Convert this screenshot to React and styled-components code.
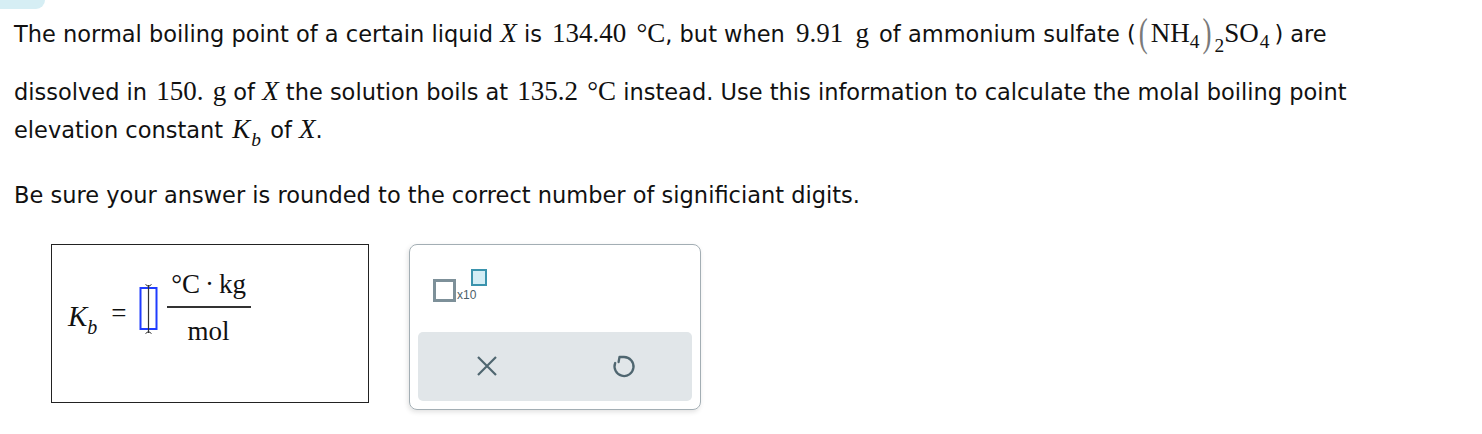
import React from 'react';
import styled, { createGlobalStyle } from 'styled-components';

const Global = createGlobalStyle`
  html, body { margin: 0; padding: 0; background: #fff; }
  body { font-family: "DejaVu Sans", Verdana, sans-serif; color: #111; }
`;

const Page = styled.div`
  width: 1482px;
  height: 434px;
  overflow: hidden;
  position: relative;
`;

const Tab = styled.div`
  width: 45px;
  height: 9px;
  background: #d6eef4;
  border-bottom-right-radius: 10px;
`;

const Question = styled.div`
  padding: 6px 0 0 14px;
  font-size: 22.5px;
  line-height: 38px;
  white-space: nowrap;
`;

const Line = styled.div`
  height: 38px;
  margin-bottom: ${(p) => p.$gap || 0}px;
`;

const M = styled.span`
  font-family: "Liberation Serif", "Times New Roman", serif;
  font-size: 1.2em;
  line-height: 0;
  font-style: ${(p) => (p.$i ? 'italic' : 'normal')};
  margin: 0 ${(p) => p.$mr ?? p.$mx ?? 0}px 0 ${(p) => p.$ml ?? p.$mx ?? 0}px;
`;

const Sub = styled.span`
  font-size: 72%;
  position: relative;
  top: ${(p) => p.$drop || 0.3}em;
  margin-left: ${(p) => p.$ml || 0}px;
`;

const BigParen = styled.span`
  display: inline-block;
  color: #7a7a7a;
  transform: scaleY(1.45);
  transform-origin: 50% 60%;
  margin: 0 3px;
`;

const AnswerRow = styled.div`
  display: flex;
  align-items: flex-start;
  padding-left: 51px;
  margin-top: 30px;
  gap: 40px;
`;

const AnswerBox = styled.div`
  box-sizing: border-box;
  width: 318px;
  height: 159px;
  border: 1px solid #222;
  padding: 24px 0 0 16px;
`;

const MathRow = styled.div`
  display: flex;
  align-items: flex-start;
  font-family: "Liberation Serif", "Times New Roman", serif;
  font-size: 27px;
  line-height: 27px;
  color: #111;
`;

const Kb = styled.div`
  margin-top: 33px;
  display: flex;
  align-items: flex-start;
  font-style: italic;
  font-size: 29px;
  line-height: 29px;
`;

const KbSub = styled.span`
  font-size: 20px;
  line-height: 20px;
  margin-top: 15px;
`;

const Equals = styled.div`
  margin-top: 31px;
  margin-left: 14px;
`;

const InputSlot = styled.svg`
  margin-top: 14px;
  margin-left: 12px;
  flex: none;
`;

const Fraction = styled.div`
  display: flex;
  flex-direction: column;
  align-items: center;
  margin-left: 9px;
  width: 84px;
`;

const Num = styled.div`
  line-height: 31px;
  padding-bottom: 6px;
  white-space: nowrap;
`;

const Bar = styled.div`
  width: 100%;
  height: 2px;
  background: #333;
`;

const Den = styled.div`
  line-height: 31px;
  margin-top: 8px;
`;

const Dot = styled.span`
  margin: 0 5px;
`;

const Panel = styled.div`
  box-sizing: border-box;
  width: 292px;
  height: 166px;
  border: 1px solid #a3aeb4;
  border-radius: 8px;
  box-shadow: -1px 2px 5px rgba(0, 0, 0, 0.12);
  padding: 8px;
  display: flex;
  flex-direction: column;
`;

const TopArea = styled.div`
  height: 79px;
  padding: 16px 0 0 15px;
  box-sizing: border-box;
`;

const ExpIcon = styled.div`
  display: inline-flex;
  align-items: flex-start;
`;

const BigSquare = styled.div`
  box-sizing: border-box;
  width: 23px;
  height: 23px;
  border: 3px solid #7d9099;
  margin-top: 10px;
`;

const ExpLabel = styled.span`
  font-family: "Liberation Sans", Arial, sans-serif;
  font-size: 12px;
  line-height: 12px;
  color: #4b5e68;
  margin-top: 20px;
  margin-left: 1px;
`;

const SmallSquare = styled.div`
  box-sizing: border-box;
  width: 16px;
  height: 17px;
  border: 2.5px solid #3a93ad;
  background: #d3edf5;
  margin-left: -5px;
`;

const ButtonBar = styled.div`
  height: 70px;
  background: #e1e6e9;
  border-radius: 5px;
  display: flex;
`;

const ToolButton = styled.div`
  flex: 1;
  display: flex;
  align-items: center;
  justify-content: center;
  color: #4f6670;
`;

export default function App() {
  return (
    <Page>
      <Global />
      <Tab />
      <Question>
        <Line $gap={20}>
          The normal boiling point of a certain liquid <M $i>X</M> is <M $mx={3}>134.40</M> <M>°C</M>, but when{' '}
          <M $mx={4}>9.91</M> <M $ml={1} $mr={3}>g</M> of ammonium sulfate (
          <M $ml={0} $mr={5}>
            <BigParen>(</BigParen>NH<Sub>4</Sub>
            <BigParen>)</BigParen>
            <Sub $drop={0.5}>2</Sub>SO<Sub $ml={1}>4</Sub>
          </M>
          ) are
        </Line>
        <Line>
          dissolved in <M $mx={2}>150.</M> <M>g</M> of <M $i>X</M> the solution boils at <M $mx={2}>135.2</M>{' '}
          <M>°C</M> instead. Use this information to calculate the molal boiling point
        </Line>
        <Line $gap={27}>
          elevation constant{' '}
          <M $i $mx={2}>
            K<Sub $ml={1} $drop={0.4}>b</Sub>
          </M>{' '}
          of <M $i>X</M>.
        </Line>
        <Line>Be sure your answer is rounded to the correct number of significiant digits.</Line>
      </Question>
      <AnswerRow>
        <AnswerBox>
          <MathRow>
            <Kb>
              K<KbSub>b</KbSub>
            </Kb>
            <Equals>=</Equals>
            <InputSlot width="19" height="52" viewBox="0 0 19 52">
              <rect x="1.5" y="5" width="16" height="41" fill="#fff" stroke="#1f3cff" strokeWidth="2" />
              <line x1="9.5" y1="2" x2="9.5" y2="50" stroke="#333" strokeWidth="1.2" />
              <path d="M6.5 1.5 L9.5 3.5 L12.5 1.5 M6.5 50.5 L9.5 48.5 L12.5 50.5" stroke="#333" strokeWidth="1" fill="none" />
            </InputSlot>
            <Fraction>
              <Num>
                °C<Dot>·</Dot>kg
              </Num>
              <Bar />
              <Den>mol</Den>
            </Fraction>
          </MathRow>
        </AnswerBox>
        <Panel>
          <TopArea>
            <ExpIcon>
              <BigSquare />
              <ExpLabel>x10</ExpLabel>
              <SmallSquare />
            </ExpIcon>
          </TopArea>
          <ButtonBar>
            <ToolButton>
              <svg width="22" height="22" viewBox="0 0 22 22">
                <path d="M2 2 L20 20 M20 2 L2 20" stroke="currentColor" strokeWidth="2.2" fill="none" />
              </svg>
            </ToolButton>
            <ToolButton>
              <svg width="26" height="30" viewBox="0 0 26 30">
                <path
                  d="M13 6 H8.5 L7.6 11 M13 6 A9.5 9.5 0 1 1 4.2 12"
                  stroke="currentColor"
                  strokeWidth="2.3"
                  fill="none"
                  strokeLinecap="round"
                  strokeLinejoin="round"
                />
              </svg>
            </ToolButton>
          </ButtonBar>
        </Panel>
      </AnswerRow>
    </Page>
  );
}
